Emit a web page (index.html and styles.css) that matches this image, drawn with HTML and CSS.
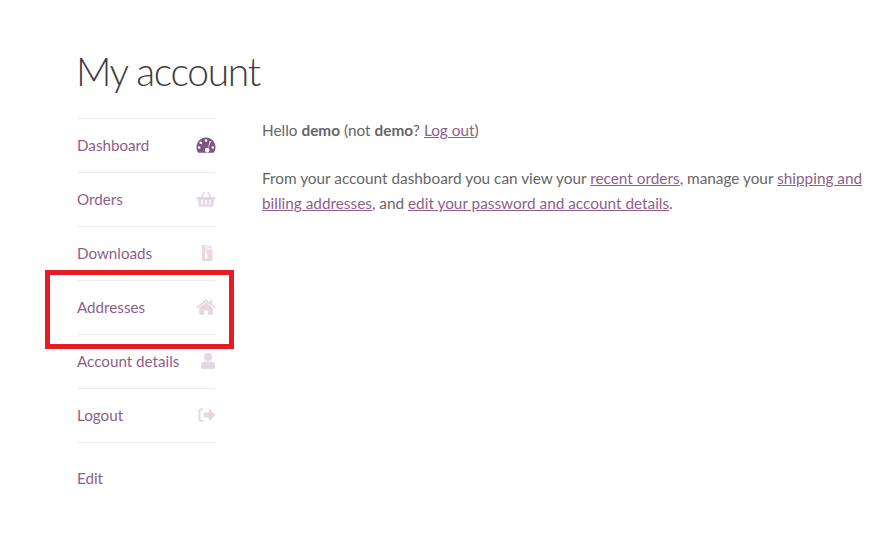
FILE: index.html
```html
<!DOCTYPE html>
<html lang="en">
<head>
<meta charset="utf-8">
<title>My account</title>
<link rel="stylesheet" href="styles.css">
</head>
<body>
<div class="page">
  <h1 class="title">My account</h1>
  <div class="account">
    <nav class="nav">
      <ul class="nav-list">
        <li class="nav-item is-active"><a href="#">Dashboard</a>
          <svg class="icon" viewBox="0 0 20 16"><path fill-rule="evenodd" d="M10 0.500C4.600 0.500 0.500 4.900 0.500 10.200c0 1.900 0.500 3.500 1.400 5a1 1 0 0 0 .9.5h14.400a1 1 0 0 0 .9-.5c.9-1.500 1.400-3.100 1.400-5C19.500 4.900 15.400 .5 10 .5zM10 2.300a1.300 1.300 0 1 1 0 2.600 1.300 1.300 0 0 1 0-2.600zM4.700 4.500a1.300 1.300 0 1 1 0 2.600 1.300 1.300 0 0 1 0-2.600zM3.200 9.200a1.300 1.300 0 1 1 0 2.600 1.300 1.300 0 0 1 0-2.600zM16.800 9.200a1.300 1.300 0 1 1 0 2.600 1.300 1.300 0 0 1 0-2.600zM13.800 3.800l1.300.5-2.900 6.700a2.300 2.300 0 1 1-3.300 1.500 2.300 2.300 0 0 1 3.100-1.400z"/></svg></li>
        <li class="nav-item"><a href="#">Orders</a>
          <svg class="icon" viewBox="0 0 20 16"><path fill-rule="evenodd" d="M7.800 .6L9 1.300 6.500 6h7L11 1.300 12.200.6 15.200 6H19.500v1.800h-1L17.300 15a1 1 0 0 1-1 .8H3.700a1 1 0 0 1-1-.8L1.500 7.800h-1V6h4.300zM5.300 9v4.500h1.500V9zM9.200 9v4.500h1.600V9zM13.200 9v4.500h1.500V9z"/></svg></li>
        <li class="nav-item"><a href="#">Downloads</a>
          <svg class="icon" viewBox="0 0 20 16"><path fill-rule="evenodd" d="M6 0h5.500v4.500h5V16H6zM12.500 0l4 3.500h-4zM9 1v1.500h1.700V1zM9 3.500V5h1.700V3.500zM9 6v1.500h1.700V6zM9 8.500v5h2.500v-5z"/></svg></li>
        <li class="nav-item"><a href="#">Addresses</a>
          <svg class="icon" viewBox="0 0 20 16"><path d="M10 3.200l6.800 5.600v6.400a.7.700 0 0 1-.7.700h-4.300v-4.600H8.200v4.600H3.900a.7.700 0 0 1-.7-.7V8.800zM10 .2l4 3.300V1.300h2.300v4.100l3.500 2.900-1 1.200L10 2.400 1.200 9.500l-1-1.200z"/></svg></li>
        <li class="nav-item"><a href="#">Account details</a>
          <svg class="icon" viewBox="0 0 20 16"><circle cx="12" cy="4" r="4"/><path d="M9 8.500h6c2.500 0 4 1.500 4 4v2a1.500 1.500 0 0 1-1.500 1.500h-11A1.500 1.500 0 0 1 5 14.500v-2c0-2.500 1.500-4 4-4z"/></svg></li>
        <li class="nav-item"><a href="#">Logout</a>
          <svg class="icon" viewBox="0 0 20 16"><path d="M12.800 1.800L19.800 8l-7 6.200V10.600H7.500V5.400h5.300zM7.500 3H6a1.500 1.500 0 0 0-1.500 1.500v7A1.500 1.500 0 0 0 6 13h1.500v1.800H5.500A3 3 0 0 1 2.500 11.800V4.200a3 3 0 0 1 3-3h2z"/></svg></li>
      </ul>
      <a class="edit" href="#">Edit</a>
    </nav>
    <main class="content">
      <p class="hello">Hello <strong>demo</strong> (not <strong>demo</strong>? <a href="#">Log out</a>)</p>
      <p class="intro">From your account dashboard you can view your <a href="#">recent orders</a>, manage your <a href="#">shipping and billing addresses</a>, and <a href="#">edit your password and account details</a>.</p>
    </main>
  </div>
</div>
<div class="highlight"></div>
</body>
</html>
```
FILE: styles.css
```css
* { box-sizing: border-box; }
html, body { margin: 0; padding: 0; background: #fff; height: 533px; overflow: hidden; }
body {
  font-family: "Lato", "Noto Sans", sans-serif;
  font-size: 15.2px;
  color: #666;
  position: relative;
}
.page { padding: 46px 0 0 77px; }
.title {
  margin: 0 0 22px -1px;
  font-family: "Lato", sans-serif;
  font-weight: 300;
  font-size: 39px;
  letter-spacing: -1.3px;
  line-height: 50px;
  color: #3d3d3d;
}
.account { display: flex; gap: 47px; }
.nav { width: 138px; flex: none; }
.nav-list { list-style: none; margin: 0; padding: 0; border-top: 1px solid #ececec; }
.nav-item {
  height: 54px;
  border-bottom: 1px solid #ececec;
  display: flex;
  align-items: center;
  justify-content: space-between;
  padding-bottom: 1px;
}
.nav-item a, .edit { color: #8f5e88; text-decoration: none; }
.icon { width: 20px; height: 16px; fill: #e5d8e3; flex: none; margin-right: -1px; }
.is-active .icon { fill: #7f5480; }
.edit { display: block; margin-top: 24px; line-height: 22px; }
.content { width: 604px; font-size: 15.35px; }
.content p { margin: 0; line-height: 25px; }
.hello { padding-bottom: 23px; }
.content a { color: #8f5e88; text-decoration: underline; }
.content strong { font-weight: 700; }
.highlight {
  position: absolute;
  left: 45px;
  top: 270px;
  width: 189px;
  height: 79px;
  border: 5px solid #e61b23;
}
```
